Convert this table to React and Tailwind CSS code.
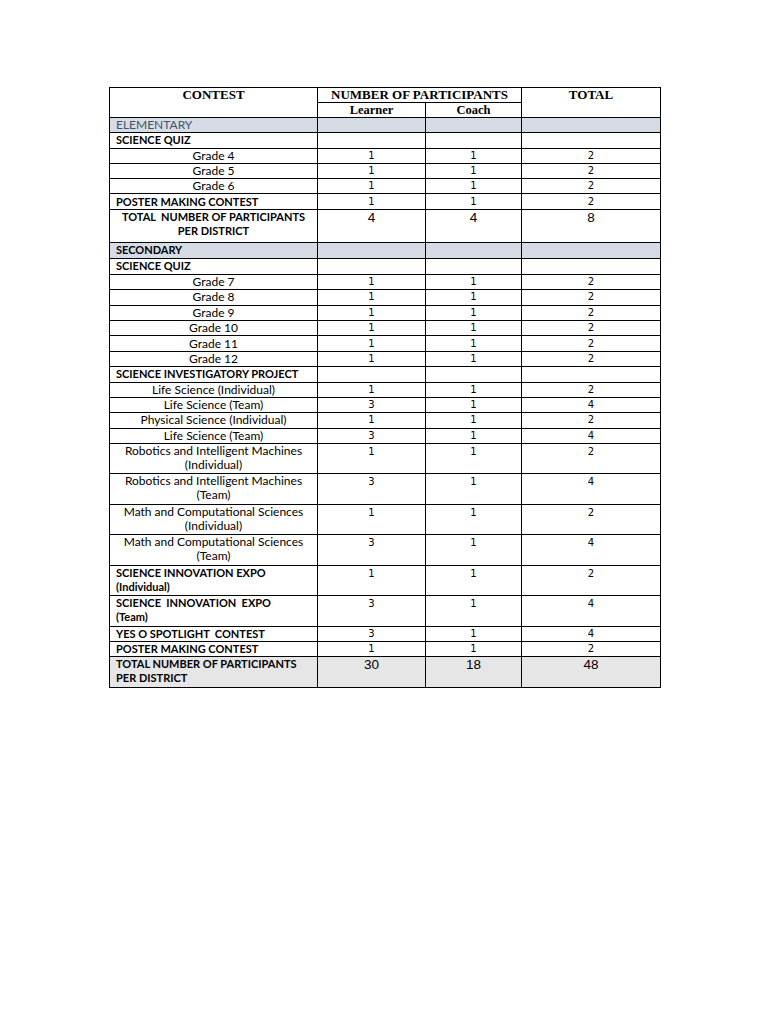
import React from "react"

const elementary = [
  { label: "Grade 4", l: 1, c: 1, t: 2 },
  { label: "Grade 5", l: 1, c: 1, t: 2 },
  { label: "Grade 6", l: 1, c: 1, t: 2 },
]

const secondaryQuiz = [
  { label: "Grade 7", l: 1, c: 1, t: 2 },
  { label: "Grade 8", l: 1, c: 1, t: 2 },
  { label: "Grade 9", l: 1, c: 1, t: 2 },
  { label: "Grade 10", l: 1, c: 1, t: 2 },
  { label: "Grade 11", l: 1, c: 1, t: 2 },
  { label: "Grade 12", l: 1, c: 1, t: 2 },
]

const sip = [
  { label: ["Life Science (Individual)"], l: 1, c: 1, t: 2 },
  { label: ["Life Science (Team)"], l: 3, c: 1, t: 4 },
  { label: ["Physical Science (Individual)"], l: 1, c: 1, t: 2 },
  { label: ["Life Science (Team)"], l: 3, c: 1, t: 4 },
  { label: ["Robotics and Intelligent Machines", "(Individual)"], l: 1, c: 1, t: 2 },
  { label: ["Robotics and Intelligent Machines", "(Team)"], l: 3, c: 1, t: 4 },
  { label: ["Math and Computational Sciences", "(Individual)"], l: 1, c: 1, t: 2 },
  { label: ["Math and Computational Sciences", "(Team)"], l: 3, c: 1, t: 4 },
]

const td = "border border-black p-0 align-middle"
const num = "text-center text-[10px] font-['DejaVu_Sans',sans-serif] text-black"
const reg = "text-[12px]"
const big = "align-top text-center font-['Liberation_Sans',sans-serif] text-[13.5px] leading-[15px]"

function NumCells({ l, c, t, top }) {
  const v = top ? "align-top pt-[1px]" : ""
  return (
    <>
      <td className={`${td} ${num} ${v}`}>{l}</td>
      <td className={`${td} ${num} ${v}`}>{c}</td>
      <td className={`${td} ${num} ${v}`}>{t}</td>
    </>
  )
}

function Blank() {
  return (
    <>
      <td className={td}></td>
      <td className={td}></td>
      <td className={td}></td>
    </>
  )
}

export default function App() {
  return (
    <div className="min-h-[1024px] w-[768px] bg-white pt-[87px] pl-[109px]">
      <table className="w-[551px] table-fixed border-collapse font-['Lato',sans-serif] text-[11px] leading-[14px] text-black">
        <colgroup>
          <col className="w-[208px]" />
          <col className="w-[108px]" />
          <col className="w-[96px]" />
          <col className="w-[139px]" />
        </colgroup>
        <tbody>
          <tr className="h-[15px]">
            <td rowSpan={2} className={`${td} align-top text-center font-['Liberation_Serif',serif] text-[13px] font-bold leading-[14px]`}>CONTEST</td>
            <td colSpan={2} className={`${td} text-center font-['Liberation_Serif',serif] text-[13px] font-bold leading-[14px]`}>NUMBER OF PARTICIPANTS</td>
            <td rowSpan={2} className={`${td} align-top text-center font-['Liberation_Serif',serif] text-[13px] font-bold leading-[14px]`}>TOTAL</td>
          </tr>
          <tr className="h-[15px]">
            <td className={`${td} text-center font-['Liberation_Serif',serif] text-[12.5px] font-bold leading-[13px]`}>Learner</td>
            <td className={`${td} text-center font-['Liberation_Serif',serif] text-[12.5px] font-bold leading-[13px]`}>Coach</td>
          </tr>
          <tr className="h-[15.3px] bg-[#d6dce5]">
            <td className={`${td} px-[6px] ${reg} text-[#44546a]`}>ELEMENTARY</td>
            <Blank />
          </tr>
          <tr className="h-[15.3px]">
            <td className={`${td} px-[6px] font-bold`}>SCIENCE QUIZ</td>
            <Blank />
          </tr>
          {elementary.map((r) => (
            <tr key={r.label} className="h-[15.3px]">
              <td className={`${td} text-center ${reg}`}>{r.label}</td>
              <NumCells {...r} />
            </tr>
          ))}
          <tr className="h-[15.3px]">
            <td className={`${td} px-[6px] font-bold`}>POSTER MAKING CONTEST</td>
            <NumCells l={1} c={1} t={2} />
          </tr>
          <tr className="h-[33px]">
            <td className={`${td} align-top text-center font-bold pb-[3px]`}>
              TOTAL&nbsp; NUMBER OF PARTICIPANTS
              <br />
              PER DISTRICT
            </td>
            <td className={`${td} ${big}`}>4</td>
            <td className={`${td} ${big}`}>4</td>
            <td className={`${td} ${big}`}>8</td>
          </tr>
          <tr className="h-[16px] bg-[#d6dce5]">
            <td className={`${td} px-[6px] font-bold`}>SECONDARY</td>
            <Blank />
          </tr>
          <tr className="h-[16px]">
            <td className={`${td} px-[6px] font-bold`}>SCIENCE QUIZ</td>
            <Blank />
          </tr>
          {secondaryQuiz.map((r) => (
            <tr key={r.label} className="h-[15.4px]">
              <td className={`${td} text-center ${reg}`}>{r.label}</td>
              <NumCells {...r} />
            </tr>
          ))}
          <tr className="h-[15.5px]">
            <td className={`${td} px-[6px] font-bold`}>SCIENCE INVESTIGATORY PROJECT</td>
            <Blank />
          </tr>
          {sip.map((r, i) => (
            <tr key={i} className={r.label.length > 1 ? "h-[30.5px]" : "h-[15.3px]"}>
              <td className={`${td} text-center ${reg} ${r.label.length > 1 ? "align-top" : ""}`}>
                {r.label[0]}
                {r.label[1] && (
                  <>
                    <br />
                    {r.label[1]}
                  </>
                )}
              </td>
              <NumCells l={r.l} c={r.c} t={r.t} top={r.label.length > 1} />
            </tr>
          ))}
          <tr className="h-[30.5px]">
            <td className={`${td} align-top px-[6px] font-bold`}>
              SCIENCE INNOVATION EXPO
              <br />
              (Individual)
            </td>
            <NumCells l={1} c={1} t={2} top />
          </tr>
          <tr className="h-[30.5px]">
            <td className={`${td} align-top px-[6px] font-bold`}>
              SCIENCE&nbsp; INNOVATION&nbsp; EXPO
              <br />
              (Team)
            </td>
            <NumCells l={3} c={1} t={4} top />
          </tr>
          <tr className="h-[15.3px]">
            <td className={`${td} px-[6px] font-bold`}>YES O SPOTLIGHT&nbsp; CONTEST</td>
            <NumCells l={3} c={1} t={4} />
          </tr>
          <tr className="h-[15.3px]">
            <td className={`${td} px-[6px] font-bold`}>POSTER MAKING CONTEST</td>
            <NumCells l={1} c={1} t={2} />
          </tr>
          <tr className="h-[31px] bg-[#e7e6e6]">
            <td className={`${td} align-top px-[6px] font-bold`}>
              TOTAL NUMBER OF PARTICIPANTS
              <br />
              PER DISTRICT
            </td>
            <td className={`${td} ${big}`}>30</td>
            <td className={`${td} ${big}`}>18</td>
            <td className={`${td} ${big}`}>48</td>
          </tr>
        </tbody>
      </table>
    </div>
  )
}
